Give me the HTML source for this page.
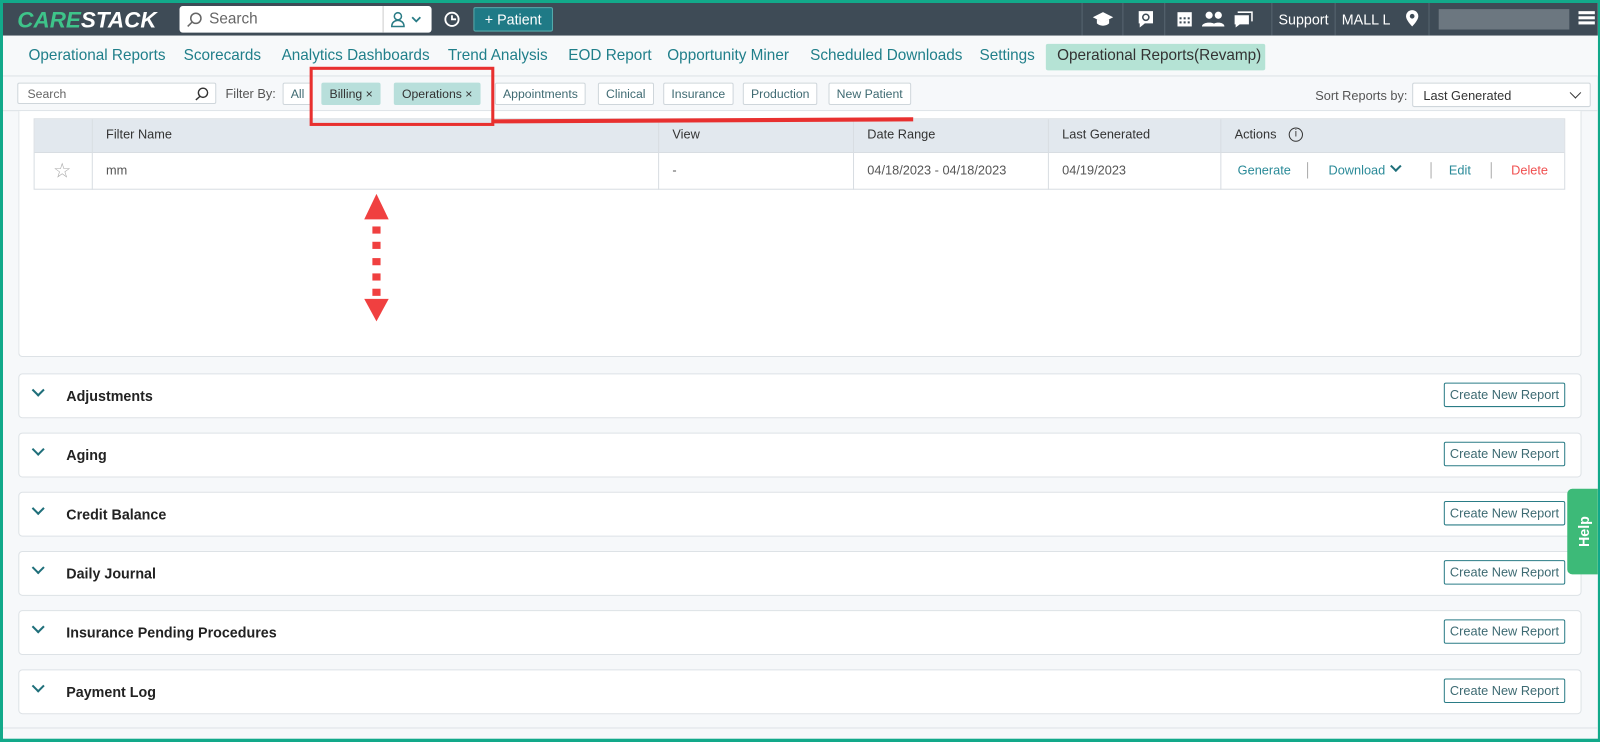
<!DOCTYPE html>
<html><head><meta charset="utf-8"><style>
*{box-sizing:border-box;margin:0;padding:0}
body{width:1600px;height:742px;overflow:hidden;background:#12a98a;font-family:"Liberation Sans",sans-serif;position:relative}
#f{position:absolute;left:3px;top:3px;width:1563px;height:721px;background:#f6f8fa;overflow:hidden;transform:scale(1.0204);transform-origin:0 0}
.a{position:absolute}
.hdr{left:0;top:0;width:1563px;height:32px;background:#3e4b56}
.nav{left:0;top:32px;width:1563px;height:40px;background:#f7f9fa;border-bottom:1px solid #dde2e6}
.nav span{position:absolute;top:11px;font-size:15px;color:#207f8a}
.chip{position:absolute;top:78px;height:22px;border:1px solid #cfd6db;background:#fff;font-size:12px;color:#3f6a72;padding:3px 7px;border-radius:2px}
.chip.s{background:#b8dfdb;border-color:#b8dfdb;color:#333}
.card{position:absolute;left:15px;width:1532px;background:#fff;border:1px solid #dde2e6;border-radius:4px}
.sec{height:44px}
.sec b{position:absolute;left:46px;top:13px;font-size:14px;color:#222}
.sec i{position:absolute;left:14px;top:11px;width:9px;height:9px;border-right:2.5px solid #1f6f7a;border-bottom:2.5px solid #1f6f7a;transform:rotate(45deg)}
.btn{position:absolute;right:15px;top:8px;width:119px;height:24px;border:1px solid #2a7c86;font-size:12.5px;color:#3d6a72;text-align:center;line-height:22px;border-radius:2px}
.th{font-size:12.5px;color:#333}
.td{font-size:12.5px;color:#555}
</style></head><body><div id="f">
<div class="a hdr">
 <div class="a" style="left:14px;top:4px;font-size:22px;font-weight:bold;font-style:italic;color:#3ec48a">CARE<span style="color:#fff">STACK</span></div>
 <div class="a" style="left:173px;top:3px;width:247px;height:26px;background:#fff;border-radius:3px"></div>
 <svg class="a" style="left:180px;top:8px" width="16" height="16"><circle cx="9" cy="7" r="5" fill="none" stroke="#666" stroke-width="1.5"/><line x1="5" y1="11" x2="1" y2="15" stroke="#666" stroke-width="1.5"/></svg>
 <div class="a" style="left:202px;top:7px;font-size:15px;color:#666">Search</div>
 <div class="a" style="left:372px;top:3px;width:1px;height:26px;background:#ccc"></div>
 <svg class="a" style="left:380px;top:8px" width="36" height="16"><circle cx="7" cy="5" r="3.5" fill="none" stroke="#2a7c86" stroke-width="1.5"/><path d="M1 15c0-4 3-6 6-6s6 2 6 6z" fill="none" stroke="#2a7c86" stroke-width="1.5"/><path d="M21 6l4 4 4-4" fill="none" stroke="#2a7c86" stroke-width="1.8"/></svg>
 <svg class="a" style="left:432px;top:8px" width="18" height="18"><circle cx="8" cy="8" r="6.5" fill="none" stroke="#fff" stroke-width="1.8"/><path d="M8 4v4h4" stroke="#fff" stroke-width="1.8" fill="none"/></svg>
 <div class="a" style="left:461px;top:4px;width:78px;height:24px;background:#1f7a86;border:1px solid #5aa;border-radius:2px;color:#fff;font-size:14px;text-align:center;line-height:22px">+ Patient</div>
 <div class="a" style="left:1057px;top:0;height:32px;width:1px;background:#576570"></div>
 <svg class="a" style="left:1067px;top:8px" width="22" height="16"><path d="M11 1L1 6l10 5 10-5z M5 8v4c3 3 9 3 12 0V8l-6 3z" fill="#fff"/></svg>
 <div class="a" style="left:1097px;top:0;height:32px;width:1px;background:#576570"></div>
 <svg class="a" style="left:1110px;top:6px" width="20" height="20"><path d="M3 2h14v12H9l-5 4v-4H3z" fill="#fff"/><circle cx="10" cy="8" r="3" fill="none" stroke="#3e4b56" stroke-width="1.5"/></svg>
 <div class="a" style="left:1138px;top:0;height:32px;width:1px;background:#576570"></div>
 <svg class="a" style="left:1150px;top:7px" width="90" height="18"><rect x="1" y="2" width="14" height="14" fill="#fff"/><g fill="#3e4b56"><rect x="3" y="7" width="2" height="2"/><rect x="7" y="7" width="2" height="2"/><rect x="11" y="7" width="2" height="2"/><rect x="3" y="11" width="2" height="2"/><rect x="7" y="11" width="2" height="2"/><rect x="11" y="11" width="2" height="2"/></g><circle cx="32" cy="5" r="3.5" fill="#fff"/><circle cx="41" cy="5" r="3.5" fill="#fff"/><path d="M25 16c0-5 14-5 14 0zM35 16c0-5 12-5 12 0z" fill="#fff"/><path d="M57 5h14v9h-9l-4 3v-3h-1z" fill="#fff"/><path d="M60 2h14v9" fill="none" stroke="#fff" stroke-width="1.5"/></svg>
 <div class="a" style="left:1243px;top:0;height:32px;width:1px;background:#576570"></div>
 <div class="a" style="left:1250px;top:8px;color:#fff;font-size:14px">Support</div>
 <div class="a" style="left:1305px;top:0;height:32px;width:1px;background:#576570"></div>
 <div class="a" style="left:1312px;top:8px;color:#fff;font-size:14px">MALL L</div>
 <svg class="a" style="left:1374px;top:6px" width="14" height="18"><path d="M7 1a6 6 0 0 0-6 6c0 4 6 10 6 10s6-6 6-10a6 6 0 0 0-6-6z" fill="#fff"/><circle cx="7" cy="7" r="2.3" fill="#3e4b56"/></svg>
 <div class="a" style="left:1397px;top:0;height:32px;width:1px;background:#576570"></div>
 <div class="a" style="left:1407px;top:6px;width:128px;height:20px;background:#6c7780"></div>
 <div class="a" style="left:1544px;top:8px;width:16px;height:3px;background:#fff;box-shadow:0 5px 0 #fff,0 10px 0 #fff"></div>
</div>
<div class="a nav">
 <span style="left:25px">Operational Reports</span><span style="left:177px">Scorecards</span><span style="left:273px">Analytics Dashboards</span><span style="left:436px">Trend Analysis</span><span style="left:554px">EOD Report</span><span style="left:651px">Opportunity Miner</span><span style="left:791px">Scheduled Downloads</span><span style="left:957px">Settings</span>
 <div class="a" style="left:1022px;top:8px;width:215px;height:26px;background:#b5e3d5;border-radius:2px"></div>
 <span style="left:1033px;color:#333">Operational Reports(Revamp)</span>
</div>
<div class="a" style="left:14px;top:78px;width:195px;height:21px;background:#fff;border:1px solid #cfd6db;border-radius:2px;font-size:12px;color:#666;padding:3px 9px">Search</div>
<svg class="a" style="left:188px;top:82px" width="14" height="14"><circle cx="8" cy="6" r="4.5" fill="none" stroke="#333" stroke-width="1.4"/><line x1="5" y1="9.5" x2="1" y2="13" stroke="#333" stroke-width="1.4"/></svg>
<div class="a" style="left:218px;top:82px;font-size:12.5px;color:#555">Filter By:</div>
<div class="chip" style="left:274px">All</div>
<div class="chip s" style="left:312px">Billing ×</div>
<div class="chip s" style="left:383px">Operations ×</div>
<div class="chip" style="left:482px">Appointments</div>
<div class="chip" style="left:583px">Clinical</div>
<div class="chip" style="left:647px">Insurance</div>
<div class="chip" style="left:725px">Production</div>
<div class="chip" style="left:809px">New Patient</div>
<div class="a" style="left:1286px;top:84px;font-size:12.5px;color:#555">Sort Reports by:</div>
<div class="a" style="left:1381px;top:78px;width:175px;height:24px;background:#fff;border:1px solid #cfd6db;border-radius:2px;font-size:12.5px;color:#333;padding:5px 10px">Last Generated</div>
<div class="a" style="left:1537px;top:84px;width:8px;height:8px;border-right:1.5px solid #333;border-bottom:1.5px solid #333;transform:rotate(45deg)"></div>
<div class="a" style="left:0;top:105px;width:1563px;height:1px;background:#dde2e6"></div>
<div class="card" style="top:106px;height:241px;border-top:none;border-radius:0 0 4px 4px"></div>
<div class="a" style="left:30px;top:113px;width:1501px;height:70px;border:1px solid #d8dde2;background:#fff"></div>
<div class="a" style="left:31px;top:114px;width:1499px;height:33px;background:#e2e8ee;border-bottom:1px solid #d8dde2"></div>
<div class="a" style="left:87px;top:114px;width:1px;height:69px;background:#d8dde2"></div>
<div class="a" style="left:642px;top:114px;width:1px;height:69px;background:#d8dde2"></div>
<div class="a" style="left:833px;top:114px;width:1px;height:69px;background:#d8dde2"></div>
<div class="a" style="left:1024px;top:114px;width:1px;height:69px;background:#d8dde2"></div>
<div class="a" style="left:1193px;top:114px;width:1px;height:69px;background:#d8dde2"></div>
<div class="a th" style="left:101px;top:122px">Filter Name</div>
<div class="a th" style="left:656px;top:122px">View</div>
<div class="a th" style="left:847px;top:122px">Date Range</div>
<div class="a th" style="left:1038px;top:122px">Last Generated</div>
<div class="a th" style="left:1207px;top:122px">Actions</div>
<div class="a" style="left:1260px;top:122px;width:14px;height:14px;border:1.3px solid #333;border-radius:50%;font-size:10px;text-align:center;line-height:12px;color:#333">i</div>
<div class="a" style="left:49px;top:152px;font-size:20px;color:#aaa">☆</div>
<div class="a td" style="left:101px;top:157px">mm</div>
<div class="a td" style="left:656px;top:157px">-</div>
<div class="a td" style="left:847px;top:157px">04/18/2023 - 04/18/2023</div>
<div class="a td" style="left:1038px;top:157px">04/19/2023</div>
<div class="a td" style="left:1210px;top:157px;color:#2a8a98">Generate</div>
<div class="a" style="left:1278px;top:156px;width:1px;height:16px;background:#aaa"></div>
<div class="a td" style="left:1299px;top:157px;color:#2a8a98">Download</div>
<div class="a" style="left:1361px;top:156px;width:8px;height:8px;border-right:2px solid #1f6f7a;border-bottom:2px solid #1f6f7a;transform:rotate(45deg)"></div>
<div class="a" style="left:1399px;top:156px;width:1px;height:16px;background:#aaa"></div>
<div class="a td" style="left:1417px;top:157px;color:#2a8a98">Edit</div>
<div class="a" style="left:1458px;top:156px;width:1px;height:16px;background:#aaa"></div>
<div class="a td" style="left:1478px;top:157px;color:#f05050">Delete</div>
<div class="card sec" style="top:363px"><i></i><b>Adjustments</b><div class="btn">Create New Report</div></div>
<div class="card sec" style="top:421px"><i></i><b>Aging</b><div class="btn">Create New Report</div></div>
<div class="card sec" style="top:479px"><i></i><b>Credit Balance</b><div class="btn">Create New Report</div></div>
<div class="card sec" style="top:537px"><i></i><b>Daily Journal</b><div class="btn">Create New Report</div></div>
<div class="card sec" style="top:595px"><i></i><b>Insurance Pending Procedures</b><div class="btn">Create New Report</div></div>
<div class="card sec" style="top:653px"><i></i><b>Payment Log</b><div class="btn">Create New Report</div></div>
<div class="a" style="left:0;top:710px;width:1563px;height:1px;background:#dde2e6"></div>
<div class="a" style="left:1533px;top:476px;width:30px;height:84px;background:#3dba78;border-radius:5px 0 0 5px"></div>
<div class="a" style="left:1534px;top:510px;color:#fff;font-weight:bold;font-size:14px;transform:rotate(-90deg)">Help</div>
<svg class="a" style="left:0;top:0" width="1563" height="736">
<rect x="302" y="64" width="178" height="55" fill="none" stroke="#e8302f" stroke-width="3"/>
<path d="M480 116 L892 114" stroke="#e8302f" stroke-width="4"/>
<polygon points="366,187 354,212 378,212" fill="#f04040"/>
<g fill="#f04040"><rect x="362" y="219" width="8" height="7"/><rect x="362" y="234" width="8" height="7"/><rect x="362" y="250" width="8" height="7"/><rect x="362" y="265" width="8" height="7"/><rect x="362" y="280" width="8" height="7"/></g>
<polygon points="366,312 354,290 378,290" fill="#f04040"/>
</svg>
</div></body></html>
